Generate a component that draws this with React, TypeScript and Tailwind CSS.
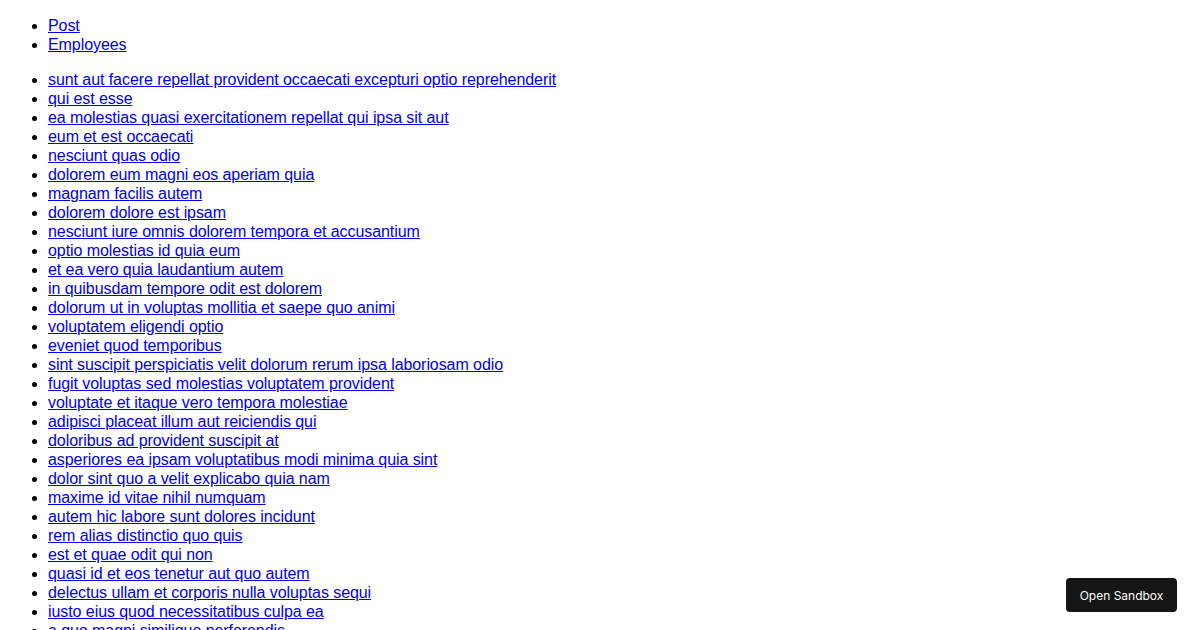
const NAV = ["Post", "Employees"];

const POSTS = [
  "sunt aut facere repellat provident occaecati excepturi optio reprehenderit",
  "qui est esse",
  "ea molestias quasi exercitationem repellat qui ipsa sit aut",
  "eum et est occaecati",
  "nesciunt quas odio",
  "dolorem eum magni eos aperiam quia",
  "magnam facilis autem",
  "dolorem dolore est ipsam",
  "nesciunt iure omnis dolorem tempora et accusantium",
  "optio molestias id quia eum",
  "et ea vero quia laudantium autem",
  "in quibusdam tempore odit est dolorem",
  "dolorum ut in voluptas mollitia et saepe quo animi",
  "voluptatem eligendi optio",
  "eveniet quod temporibus",
  "sint suscipit perspiciatis velit dolorum rerum ipsa laboriosam odio",
  "fugit voluptas sed molestias voluptatem provident",
  "voluptate et itaque vero tempora molestiae",
  "adipisci placeat illum aut reiciendis qui",
  "doloribus ad provident suscipit at",
  "asperiores ea ipsam voluptatibus modi minima quia sint",
  "dolor sint quo a velit explicabo quia nam",
  "maxime id vitae nihil numquam",
  "autem hic labore sunt dolores incidunt",
  "rem alias distinctio quo quis",
  "est et quae odit qui non",
  "quasi id et eos tenetur aut quo autem",
  "delectus ullam et corporis nulla voluptas sequi",
  "iusto eius quod necessitatibus culpa ea",
  "a quo magni similique perferendis",
  "ullam ut quidem id aut vel consequuntur",
  "doloremque illum aliquid sunt",
  "qui explicabo molestiae dolorem",
  "magnam ut rerum iure",
];

function LinkList({ items }: { items: string[] }) {
  return (
    <ul className="my-4 list-disc pl-10">
      {items.map((t, i) => (
        <li key={i}>
          <a href="#" className="text-[#0000ee] underline">
            {t}
          </a>
        </li>
      ))}
    </ul>
  );
}

export default function App() {
  return (
    <div className="h-[630px] overflow-hidden bg-white font-['Liberation_Sans',Arial,sans-serif] text-[16px] leading-[19px] tracking-[-0.07px] text-black">
      <div className="mx-2">
        <LinkList items={NAV} />
        <LinkList items={POSTS} />
      </div>
      <button className="fixed bottom-[18px] right-[23px] flex h-[34px] w-[111px] items-center justify-center rounded-[4px] bg-[#151515] font-['Inter',sans-serif] text-[12px] tracking-normal text-white">
        Open Sandbox
      </button>
    </div>
  );
}
